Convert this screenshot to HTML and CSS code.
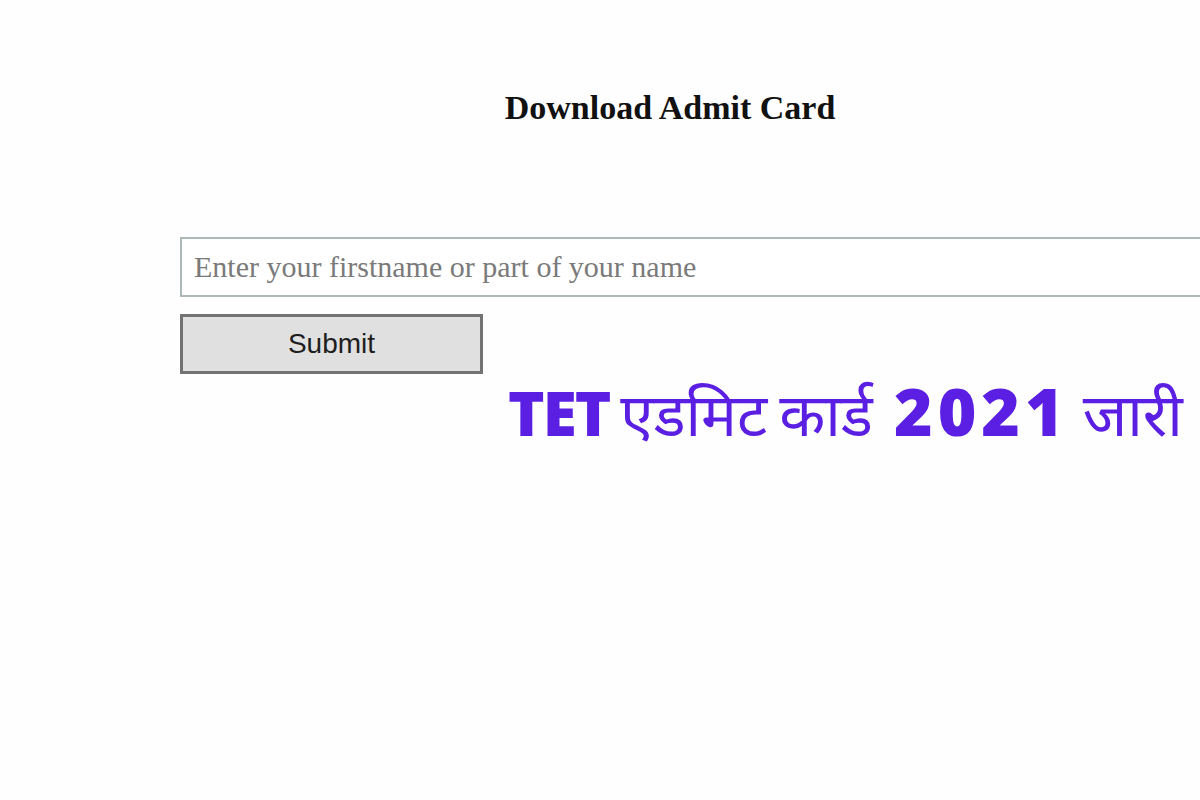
FILE: index.html
```html
<!DOCTYPE html>
<html>
<head>
<meta charset="utf-8">
<link rel="stylesheet" href="styles.css">
</head>
<body>
<div class="page">
  <h1 class="title">Download Admit Card</h1>
  <form class="form">
    <input class="name-input" type="text" placeholder="Enter your firstname or part of your name">
    <div class="row">
      <button class="submit" type="button">Submit</button>
    </div>
    <div class="headline">
      <span class="b tet">TET</span>
      <span class="hi admit">एडमिट</span>
      <span class="hi card">कार्ड</span>
      <span class="b year">2021</span>
      <span class="hi jari">जारी</span>
    </div>
  </form>
</div>
</body>
</html>
```
FILE: styles.css
```css
html, body {
  margin: 0;
  padding: 0;
  background: #fefefe;
  overflow: hidden;
}
.page {
  width: 1200px;
  height: 800px;
  padding-top: 88px;
  box-sizing: border-box;
}
.title {
  margin: 0;
  padding-left: 140px;
  text-align: center;
  font-family: "Liberation Serif", serif;
  font-weight: bold;
  font-size: 34px;
  color: #111;
  line-height: 40px;
}
.form {
  margin-top: 109px;
  padding-left: 180px;
  display: flex;
  flex-direction: column;
}
.name-input {
  width: 1040px;
  height: 60px;
  box-sizing: border-box;
  border: 2px solid #adb8b8;
  border-right: none;
  padding: 0 12px;
  font-family: "Liberation Serif", serif;
  font-size: 30px;
  color: #333;
  background: #fff;
  outline: none;
}
.name-input::placeholder {
  color: #7a7a7a;
}
.row {
  margin-top: 17px;
}
.submit {
  width: 303px;
  height: 60px;
  box-sizing: border-box;
  border: 3px solid #737373;
  background: #e0e0e0;
  font-family: "Liberation Sans", Arial, sans-serif;
  font-size: 28px;
  color: #1e1e1e;
  padding: 0;
}
.headline {
  margin-top: 1px;
  margin-left: 328px;
  display: flex;
  align-items: baseline;
  color: #5b1fe4;
  line-height: 70px;
  white-space: nowrap;
}
.hi {
  font-family: "Noto Sans", "Noto Sans Devanagari", sans-serif;
  font-size: 60px;
}
.b {
  font-family: "Open Sans", sans-serif;
  font-weight: 800;
}
.tet {
  font-size: 62px;
  letter-spacing: -2px;
}
.admit {
  margin-left: 11px;
}
.card {
  margin-left: 12px;
}
.year {
  font-size: 66px;
  letter-spacing: 5px;
  margin-left: 21px;
}
.jari {
  margin-left: 14px;
}
```
